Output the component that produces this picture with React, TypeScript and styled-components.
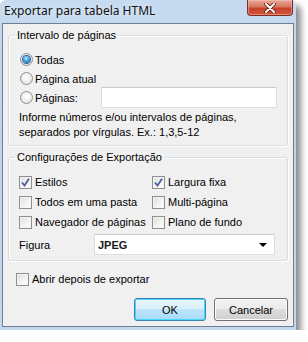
import * as React from 'react';
import styled, { createGlobalStyle } from 'styled-components';

const GlobalStyle = createGlobalStyle`
    html, body {
        margin: 0;
        padding: 0;
        background: #ffffff;
    }
    body {
        font-family: "Liberation Sans", Arial, sans-serif;
        font-size: 11px;
        color: #000;
    }
`;

type CheckedProps = {
    checked?: boolean;
}

const Window = styled.div`
    width: 296px;
    height: 330px;
    display: flex;
    flex-direction: column;
    background: linear-gradient(to bottom, #c6daf0 0%, #bcd3ec 40%, #c3d8ef 100%);
    border-radius: 6px 6px 0 0;
    box-shadow: 5px 5px 6px rgba(0, 0, 0, 0.45);
`;

const TitleBar = styled.div`
    height: 23px;
    display: flex;
    align-items: flex-start;
    padding-left: 4px;
    padding-right: 3px;
`;

const Title = styled.span`
    font-family: "Noto Sans", "Liberation Sans", sans-serif;
    font-size: 12px;
    line-height: 22px;
    color: #101010;
    text-shadow: 0 0 6px rgba(255, 255, 255, 0.9);
`;

const CloseButton = styled.div`
    margin-left: auto;
    width: 46px;
    height: 16px;
    box-sizing: border-box;
    border: 1px solid #7a2f22;
    border-top: none;
    border-radius: 0 0 4px 4px;
    background: linear-gradient(to bottom, #e9a99b 0%, #d8765f 45%, #c4412a 55%, #d2553c 100%);
    box-shadow: inset 0 0 0 1px rgba(255, 200, 190, 0.45);
    display: flex;
    align-items: center;
    justify-content: center;
`;

const Client = styled.div`
    flex: 1;
    margin: 0 2px 3px 2px;
    border: 1px solid #6f7f90;
    background: #f0f0f0;
    display: flex;
    flex-direction: column;
`;

const Group = styled.fieldset`
    margin: 5px 5px 0 5px;
    padding: 8px 10px 5px 10px;
    border: 1px solid #d5dfe5;
    border-radius: 3px;
    box-shadow: inset 1px 1px 0 #ffffff, 1px 1px 0 #ffffff;
    min-width: 0;
`;

const GroupTitle = styled.legend`
    padding: 0 2px;
    margin-left: -4px;
    line-height: 13px;
`;

const RadioList = styled.div`
    display: flex;
    flex-direction: column;
`;

const OptionRow = styled.label`
    height: 19px;
    display: flex;
    align-items: center;
`;

const RadioMark = styled.span<CheckedProps>`
    width: 13px;
    height: 13px;
    box-sizing: border-box;
    margin-left: 1px;
    margin-right: 2px;
    border-radius: 50%;
    border: 1px solid #8e8f8f;
    background: radial-gradient(circle at 50% 40%, #ffffff 0%, #f0f0f0 45%, #d8d8d8 100%);
    display: flex;
    align-items: center;
    justify-content: center;
    flex-shrink: 0;

    &::after {
        content: "";
        display: ${({ checked }) => checked ? "block" : "none"};
        width: 7px;
        height: 7px;
        border-radius: 50%;
        background: radial-gradient(circle at 45% 35%, #c6ecff 0%, #3f9edd 45%, #0f5691 100%);
        box-shadow: 0 0 0 1px #28659a;
    }
`;

const PagesInput = styled.input`
    margin-left: auto;
    margin-top: -1px;
    margin-bottom: -1px;
    width: 176px;
    height: 21px;
    box-sizing: border-box;
    border: 1px solid #d9dfe6;
    border-top-color: #c7ccd2;
    background: #fff;
    outline: none;
    font: inherit;
`;

const Hint = styled.p`
    margin: 3px 0 0 0;
    line-height: 15px;
`;

const CheckGrid = styled.div`
    display: grid;
    grid-template-columns: 133px 1fr;
`;

const CheckRow = styled.label`
    height: 20px;
    display: flex;
    align-items: center;
`;

const BoxMark = styled.span`
    width: 13px;
    height: 13px;
    box-sizing: border-box;
    margin-right: 3px;
    border: 1px solid #8e8f8f;
    background: linear-gradient(135deg, #dcdcdc 0%, #f4f4f4 60%, #ffffff 100%);
    box-shadow: inset 0 0 0 1px #f4f4f4;
    display: flex;
    align-items: center;
    justify-content: center;
    flex-shrink: 0;
`;

const FieldRow = styled.div`
    height: 21px;
    margin-top: 2px;
    display: flex;
    align-items: center;
`;

const FieldLabel = styled.span`
    width: 75px;
`;

const Combo = styled.div`
    width: 181px;
    height: 21px;
    box-sizing: border-box;
    border: 1px solid #d9dfe6;
    border-top-color: #c7ccd2;
    background: #fff;
    display: flex;
    align-items: center;
    padding: 0 7px 0 3px;
`;

const ComboValue = styled.span`
    flex: 1;
    font-weight: bold;
    color: #1a1a1a;
`;

const ComboArrow = styled.span`
    width: 0;
    height: 0;
    border-left: 4px solid transparent;
    border-right: 4px solid transparent;
    border-top: 4px solid #000;
`;

const OpenAfterRow = styled.label`
    height: 20px;
    margin: 8px 0 0 13px;
    display: flex;
    align-items: center;
`;

const ButtonBar = styled.div`
    margin-top: auto;
    padding: 0 5px 5px 0;
    display: flex;
    justify-content: flex-end;
    gap: 8px;
`;

type ButtonProps = {
    primary?: boolean;
}

const Button = styled.button<ButtonProps>`
    width: ${({ primary }) => primary ? "72px" : "74px"};
    height: 23px;
    box-sizing: border-box;
    font: inherit;
    color: #000;
    border-radius: 3px;
    border: 1px solid ${({ primary }) => primary ? "#3c7fb1" : "#707070"};
    background: ${({ primary }) => primary
        ? "linear-gradient(to bottom, #eaf6fd 0%, #d9f0fc 50%, #bee6fd 50%, #a7d9f5 100%)"
        : "linear-gradient(to bottom, #f2f2f2 0%, #ebebeb 50%, #dddddd 50%, #cfcfcf 100%)"};
    box-shadow: inset 0 0 0 1px ${({ primary }) => primary ? "#48d9fc" : "#fcfcfc"};
    padding: 0;
`;

const CheckIcon = () => (
    <svg width="9" height="9" viewBox="0 0 9 9">
        <path d="M1 4.5 L3.5 7.5 L8 0.8" fill="none" stroke="#4a5f97" strokeWidth="1.8" />
    </svg>
);

const CloseIcon = () => (
    <svg width="12" height="10" viewBox="0 0 12 10">
        <path d="M2 1 L10 9 M10 1 L2 9" stroke="#5a1a10" strokeWidth="3.6" strokeLinecap="round" />
        <path d="M2 1 L10 9 M10 1 L2 9" stroke="#ffffff" strokeWidth="2" strokeLinecap="round" />
    </svg>
);

type CheckProps = {
    label: string;
    checked?: boolean;
}

const Check: React.FC<CheckProps> = ({ label, checked }) => (
    <CheckRow>
        <BoxMark>{checked && <CheckIcon />}</BoxMark>
        {label}
    </CheckRow>
);

const exportOptions = [
    { label: "Estilos", checked: true },
    { label: "Largura fixa", checked: true },
    { label: "Todos em uma pasta" },
    { label: "Multi-página" },
    { label: "Navegador de páginas" },
    { label: "Plano de fundo" },
];

const App: React.FC = () => {
    return (
        <>
            <GlobalStyle />
            <Window>
                <TitleBar>
                    <Title>Exportar para tabela HTML</Title>
                    <CloseButton><CloseIcon /></CloseButton>
                </TitleBar>
                <Client>
                    <Group>
                        <GroupTitle>Intervalo de páginas</GroupTitle>
                        <RadioList>
                            <OptionRow><RadioMark checked />Todas</OptionRow>
                            <OptionRow><RadioMark />Página atual</OptionRow>
                            <OptionRow>
                                <RadioMark />Páginas:
                                <PagesInput />
                            </OptionRow>
                        </RadioList>
                        <Hint>
                            Informe números e/ou intervalos de páginas,<br />
                            separados por vírgulas. Ex.: 1,3,5-12
                        </Hint>
                    </Group>
                    <Group>
                        <GroupTitle>Configurações de Exportação</GroupTitle>
                        <CheckGrid>
                            {exportOptions.map(option =>
                                <Check key={option.label} label={option.label} checked={option.checked} />)}
                        </CheckGrid>
                        <FieldRow>
                            <FieldLabel>Figura</FieldLabel>
                            <Combo>
                                <ComboValue>JPEG</ComboValue>
                                <ComboArrow />
                            </Combo>
                        </FieldRow>
                    </Group>
                    <OpenAfterRow>
                        <BoxMark />
                        Abrir depois de exportar
                    </OpenAfterRow>
                    <ButtonBar>
                        <Button primary>OK</Button>
                        <Button>Cancelar</Button>
                    </ButtonBar>
                </Client>
            </Window>
        </>
    );
}

export default App;
